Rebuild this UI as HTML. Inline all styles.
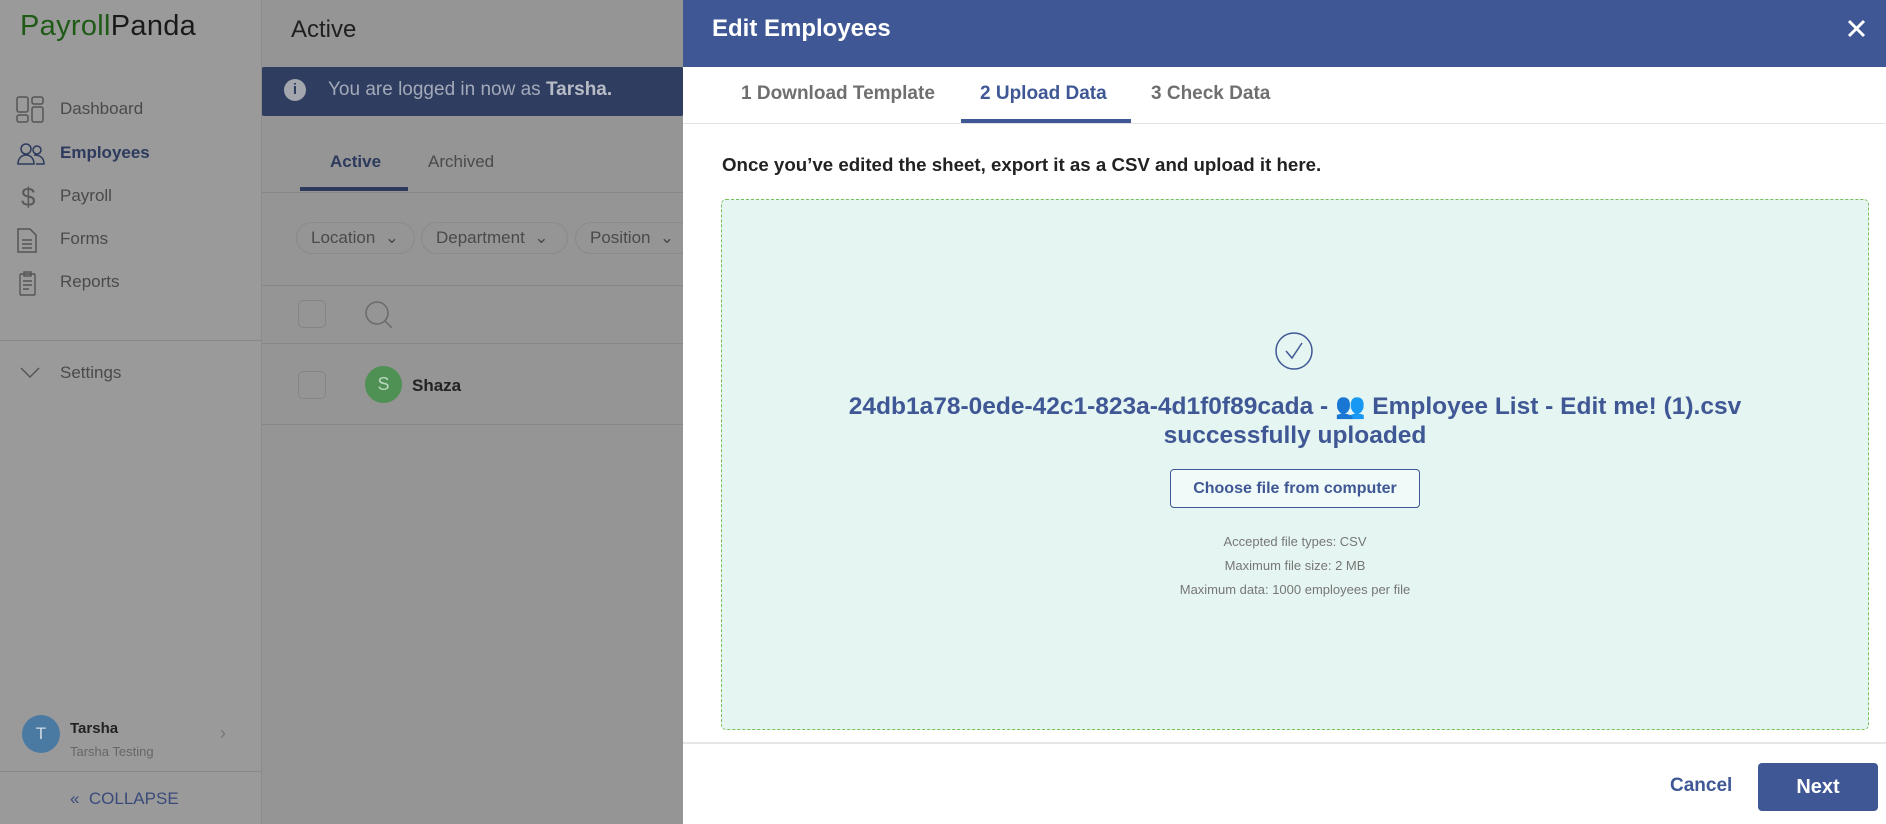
<!DOCTYPE html>
<html><head><meta charset="utf-8"><style>
*{box-sizing:border-box;margin:0;padding:0}
body{width:1886px;height:824px;overflow:hidden;position:relative;font-family:"Liberation Sans",sans-serif;background:#959595}
.a{position:absolute;white-space:nowrap}
.sb{position:absolute;left:0;top:0;width:262px;height:824px;background:#9a9a9a;border-right:1px solid #8c8c8c}
.nav{position:absolute;left:60px;font-size:17px;color:#4a4a4a}
.hl{position:absolute;height:1px;background:#878787}
.pill{position:absolute;top:222px;height:32px;border:1px solid #8a8a8a;border-radius:16px;font-size:17px;color:#4a4a4a;padding:5px 0 0 14px}
.cb{position:absolute;width:28px;height:28px;border:1.5px solid #858585;border-radius:5px}
.modal{position:absolute;left:683px;top:0;width:1203px;height:824px;background:#fff}
</style></head><body>
<div class="sb">
 <div class="a" style="left:20px;top:10px;font-size:29px;letter-spacing:0.3px"><span style="color:#1f5a17">Payroll</span><span style="color:#1a1a1a">Panda</span></div>
 <svg class="a" style="left:16px;top:96px" width="36" height="30" fill="none" stroke="#555" stroke-width="1.5"><rect x="1" y="1" width="11" height="15" rx="2"/><rect x="16" y="1" width="11" height="7" rx="2"/><rect x="1" y="19" width="11" height="7" rx="2"/><rect x="16" y="11" width="11" height="15" rx="2"/></svg>
 <div class="nav" style="top:99px">Dashboard</div>
 <svg class="a" style="left:17px;top:142px" width="34" height="24" fill="none" stroke="#2d3a5e" stroke-width="1.5"><circle cx="9" cy="7" r="5"/><path d="M1 22c0-6 4-9 8-9s8 3 8 9z"/><circle cx="20" cy="8" r="4"/><path d="M17 13c5 0 10 2 10 9h-8"/></svg>
 <div class="nav" style="top:143px;color:#2d3a5e;font-weight:bold">Employees</div>
 <div class="a" style="left:21px;top:182px;font-size:26px;color:#5a5a5a">$</div>
 <div class="nav" style="top:186px">Payroll</div>
 <svg class="a" style="left:16px;top:227px" width="22" height="28" fill="none" stroke="#555" stroke-width="1.5"><path d="M2 2h12l6 6v17H2z"/><path d="M6 13h10M6 17h10M6 21h10"/></svg>
 <div class="nav" style="top:229px">Forms</div>
 <svg class="a" style="left:19px;top:271px" width="18" height="26" fill="none" stroke="#555" stroke-width="1.4"><rect x="1" y="3" width="15" height="21" rx="1"/><rect x="5" y="1" width="7" height="4"/><path d="M4 10h9M4 14h9M4 18h6"/></svg>
 <div class="nav" style="top:272px">Reports</div>
 <div class="hl" style="left:0;top:340px;width:262px"></div>
 <svg class="a" style="left:19px;top:366px" width="22" height="14" fill="none" stroke="#555" stroke-width="1.5"><path d="M2 2l9 9 9-9"/></svg>
 <div class="nav" style="top:363px">Settings</div>
 <div class="a" style="left:22px;top:715px;width:38px;height:38px;border-radius:50%;background:#4a7aa2;color:#d0dbe6;font-size:17px;text-align:center;line-height:38px">T</div>
 <div class="a" style="left:70px;top:720px;font-size:15px;font-weight:bold;color:#222">Tarsha</div>
 <div class="a" style="left:70px;top:744px;font-size:13px;color:#666">Tarsha Testing</div>
 <div class="a" style="left:220px;top:723px;font-size:18px;color:#777">›</div>
 <div class="hl" style="left:0;top:771px;width:262px"></div>
 <div class="a" style="left:70px;top:789px;font-size:17px;color:#3a4a7a">«&nbsp; COLLAPSE</div>
</div>
<div class="a" style="left:291px;top:16px;font-size:24px;color:#1f1f1f">Active</div>
<div class="a" style="left:262px;top:67px;width:421px;height:49px;background:#2f3d60;border-radius:2px"></div>
<div class="a" style="left:284px;top:79px;width:22px;height:22px;border-radius:50%;background:#a3a6ad;color:#2f3d60;font-size:15px;font-weight:bold;text-align:center;line-height:22px">i</div>
<div class="a" style="left:328px;top:79px;font-size:19px;color:#a3a9b8">You are logged in now as <b style="color:#b8bcc6">Tarsha.</b></div>
<div class="a" style="left:330px;top:152px;font-size:17px;color:#2d3a5e;font-weight:bold">Active</div>
<div class="a" style="left:428px;top:152px;font-size:17px;color:#4a4a4a">Archived</div>
<div class="a" style="left:300px;top:187px;width:108px;height:4px;background:#2d3a5e"></div>
<div class="hl" style="left:262px;top:192px;width:421px"></div>
<div class="pill" style="left:296px;width:119px">Location &nbsp;⌄</div>
<div class="pill" style="left:421px;width:147px">Department &nbsp;⌄</div>
<div class="pill" style="left:575px;width:120px">Position &nbsp;⌄</div>
<div class="hl" style="left:262px;top:285px;width:421px"></div>
<div class="cb" style="left:298px;top:300px"></div>
<svg class="a" style="left:364px;top:300px" width="32" height="32" fill="none" stroke="#6a6a6a" stroke-width="1.5"><circle cx="13" cy="13" r="11"/><path d="M21 21l7 7"/></svg>
<div class="hl" style="left:262px;top:343px;width:421px"></div>
<div class="cb" style="left:298px;top:371px"></div>
<div class="a" style="left:365px;top:366px;width:37px;height:37px;border-radius:50%;background:#4f9055;color:#b9d6bb;font-size:18px;text-align:center;line-height:37px">S</div>
<div class="a" style="left:412px;top:376px;font-size:17px;font-weight:bold;color:#222">Shaza</div>
<div class="hl" style="left:262px;top:424px;width:421px"></div>

<div class="modal">
 <div class="a" style="left:0;top:0;width:1203px;height:67px;background:#3f5795"></div>
 <div class="a" style="left:29px;top:15px;font-size:24px;font-weight:bold;color:#fff">Edit Employees</div>
 <svg class="a" style="left:1164px;top:19px" width="19" height="19" stroke="#fff" stroke-width="3"><path d="M2 2l15 15M17 2L2 17"/></svg>
 <div class="a" style="left:58px;top:83px;font-size:19px;font-weight:bold;color:#6f6f6f">1 Download Template</div>
 <div class="a" style="left:297px;top:83px;font-size:19px;font-weight:bold;color:#3f5795">2 Upload Data</div>
 <div class="a" style="left:468px;top:83px;font-size:19px;font-weight:bold;color:#6f6f6f">3 Check Data</div>
 <div class="a" style="left:278px;top:119px;width:170px;height:4px;background:#3f5795"></div>
 <div class="a" style="left:0;top:123px;width:1203px;height:1px;background:#e2e2e2"></div>
 <div class="a" style="left:39px;top:154px;font-size:18.7px;font-weight:bold;color:#222">Once you’ve edited the sheet, export it as a CSV and upload it here.</div>
 <div class="a" style="left:38px;top:199px;width:1148px;height:531px;background:#e5f5f1;border:1px dashed #76c05a;border-radius:5px"></div>
 <svg class="a" style="left:592px;top:332px" width="38" height="38" fill="none" stroke="#3f5795" stroke-width="1.5"><circle cx="19" cy="19" r="18"/><path d="M11 19l6 7 10-15"/></svg>
 <div class="a" style="left:38px;top:392px;width:1148px;text-align:center;font-size:24.5px;font-weight:bold;color:#3f5795;line-height:29px">24db1a78-0ede-42c1-823a-4d1f0f89cada - 👥 Employee List - Edit me! (1).csv<br>successfully uploaded</div>
 <div class="a" style="left:487px;top:469px;width:250px;height:39px;border:1.5px solid #3f5795;border-radius:4px;background:#f0faf8;text-align:center;line-height:37px;font-size:16px;font-weight:bold;color:#3f5795">Choose file from computer</div>
 <div class="a" style="left:38px;top:530px;width:1148px;text-align:center;font-size:13px;color:#777;line-height:24px">Accepted file types: CSV<br>Maximum file size: 2 MB<br>Maximum data: 1000 employees per file</div>
 <div class="a" style="left:0;top:742px;width:1203px;height:2px;background:#e6e6e6"></div>
 <div class="a" style="left:987px;top:775px;font-size:19px;font-weight:bold;color:#3f5795">Cancel</div>
 <div class="a" style="left:1075px;top:763px;width:120px;height:48px;background:#3f5795;border-radius:4px;color:#fff;font-size:20px;font-weight:bold;text-align:center;line-height:48px">Next</div>
</div>
</body></html>
